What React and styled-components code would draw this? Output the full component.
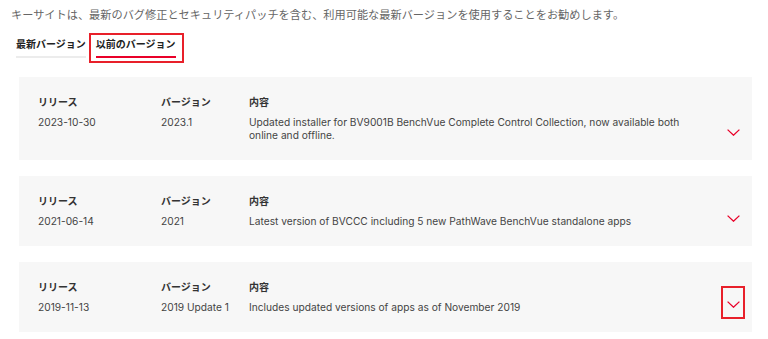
import React from 'react';
import styled, { createGlobalStyle } from 'styled-components';

const GlobalStyle = createGlobalStyle`
  body {
    margin: 0;
    background: #fff;
    font-family: "Inter", "Noto Sans CJK JP", sans-serif;
    color: #333;
  }
`;

const Page = styled.div`
  width: 768px;
  padding-top: 6px;
`;

const Intro = styled.p`
  margin: 0 0 0 11px;
  font-family: "Noto Sans CJK JP", sans-serif;
  font-size: 11.2px;
  line-height: 16px;
  color: #666;
`;

const TabBar = styled.div`
  display: flex;
  gap: 10px;
  margin: 15px 0 0 16px;
`;

const Tab = styled.div`
  position: relative;
  font-family: "Noto Sans CJK JP", sans-serif;
  font-size: 10px;
  font-weight: 700;
  line-height: 14px;
  color: #222;
  padding-bottom: 5px;
  border-bottom: 2px solid ${p => (p.active ? '#e90029' : '#ececec')};
`;

const Marker = styled.span`
  position: absolute;
  left: -7px;
  right: -8px;
  top: -4px;
  bottom: -7px;
  border: 2px solid #e8202a;
  pointer-events: none;
`;

const List = styled.div`
  display: flex;
  flex-direction: column;
  gap: 16px;
  margin: 19px 16px 0 19px;
`;

const Card = styled.div`
  display: flex;
  align-items: flex-end;
  background: #f7f7f7;
  padding: 18px 7px 13px 19px;
`;

const Grid = styled.div`
  flex: 1;
  display: grid;
  grid-template-columns: 123px 88px 1fr;
  row-gap: 7px;
  padding-bottom: 5px;
`;

const Head = styled.div`
  font-family: "Noto Sans CJK JP", sans-serif;
  font-size: 10px;
  font-weight: 700;
  line-height: 14px;
  color: #333;
`;

const Cell = styled.div`
  font-size: 10.2px;
  line-height: 13px;
  color: #444;
  white-space: ${p => (p.wide ? 'normal' : 'nowrap')};
  padding-right: ${p => (p.wide ? '40px' : '0')};
`;

const Toggle = styled.button`
  display: flex;
  background: none;
  padding: 13px 3px 9px 4px;
  margin: 0;
  cursor: pointer;
  border: 2px solid ${p => (p.marked ? '#e8202a' : 'transparent')};
`;

const Chevron = () => (
  <svg width="13" height="7" viewBox="0 0 13 7" fill="none">
    <path d="M0.6 0.6 L6.5 6.2 L12.4 0.6" stroke="#e90029" strokeWidth="1.3" />
  </svg>
);

const releases = [
  {
    date: '2023-10-30',
    version: '2023.1',
    text: 'Updated installer for BV9001B BenchVue Complete Control Collection, now available both online and offline.',
  },
  {
    date: '2021-06-14',
    version: '2021',
    text: 'Latest version of BVCCC including 5 new PathWave BenchVue standalone apps',
  },
  {
    date: '2019-11-13',
    version: '2019 Update 1',
    text: 'Includes updated versions of apps as of November 2019',
    marked: true,
  },
];

const App = () => (
  <>
    <GlobalStyle />
    <Page>
      <Intro>キーサイトは、最新のバグ修正とセキュリティパッチを含む、利用可能な最新バージョンを使用することをお勧めします。</Intro>
      <TabBar>
        <Tab>最新バージョン</Tab>
        <Tab active>
          以前のバージョン
          <Marker />
        </Tab>
      </TabBar>
      <List>
        {releases.map(r => (
          <Card key={r.date}>
            <Grid>
              <Head>リリース</Head>
              <Head>バージョン</Head>
              <Head>内容</Head>
              <Cell>{r.date}</Cell>
              <Cell>{r.version}</Cell>
              <Cell wide>{r.text}</Cell>
            </Grid>
            <Toggle marked={r.marked}>
              <Chevron />
            </Toggle>
          </Card>
        ))}
      </List>
    </Page>
  </>
);

export default App;
